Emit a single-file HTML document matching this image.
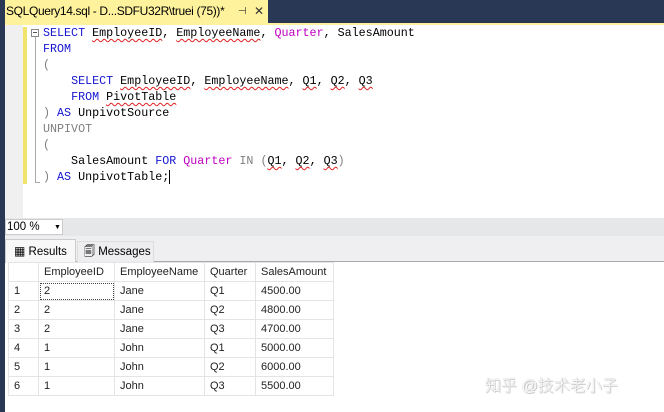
<!DOCTYPE html>
<html><head><style>
*{margin:0;padding:0;box-sizing:border-box}
body{width:664px;height:412px;overflow:hidden;background:#fff;position:relative;font-family:"Liberation Sans",sans-serif}
.abs{position:absolute}
.code{font-family:"Liberation Mono",monospace;font-size:11.7px;white-space:pre;line-height:16px;color:#000}
.k{color:#1515d0}.g{color:#808080}.m{color:#c000c0}
.u{text-decoration:underline wavy #e02020;text-decoration-thickness:1px;text-underline-offset:2px}
table{border-collapse:collapse;font-size:11px;color:#222}
td{height:19px;border:1px solid #e4e4e4;padding:0 0 0 5px}
</style></head><body>
<div class="abs" style="left:0;top:0;width:664px;height:23px;background:#293955"></div>
<div class="abs" style="left:0;top:0;width:268px;height:23px;background:#fff29d;font-size:12px;line-height:23px;padding-left:6px;color:#000;white-space:nowrap;overflow:hidden"><span style="display:inline-block;width:222px;letter-spacing:-0.35px">SQLQuery14.sql - D...SDFU32R\truei (75))*</span><span style="position:absolute;left:238px;font-size:10px;color:#333">⊣</span><span style="position:absolute;left:254px;color:#333">✕</span></div>
<div class="abs" style="left:0;top:23px;width:664px;height:2px;background:#fff29d"></div>
<div class="abs" style="left:0;top:0;width:5px;height:412px;background:#293955"></div>
<div class="abs" style="left:5px;top:25px;width:18px;height:193px;background:#f0f0f0"></div>
<div class="abs" style="left:23px;top:27px;width:4px;height:157px;background:#f2e46a"></div>
<div class="abs" style="left:31px;top:29px;width:8px;height:8px;border:1px solid #888;background:#fff"></div>
<div class="abs" style="left:33px;top:32px;width:4px;height:1px;background:#555"></div>
<div class="abs" style="left:35px;top:37px;width:1px;height:146px;background:#aaa"></div>
<div class="abs" style="left:35px;top:182px;width:5px;height:1px;background:#aaa"></div>
<div class="abs code" style="left:43px;top:25px"><span class="k">SELECT</span> <span class="u">EmployeeID</span>, <span class="u">EmployeeName</span>, <span class="m">Quarter</span>, SalesAmount
<span class="k">FROM</span>
<span class="g">(</span>
    <span class="k">SELECT</span> <span class="u">EmployeeID</span>, <span class="u">EmployeeName</span>, <span class="u">Q1</span>, <span class="u">Q2</span>, <span class="u">Q3</span>
    <span class="k">FROM</span> <span class="u">PivotTable</span>
<span class="g">)</span> <span class="k">AS</span> UnpivotSource
<span class="g">UNPIVOT</span>
<span class="g">(</span>
    SalesAmount <span class="k">FOR</span> <span class="m">Quarter</span> <span class="g">IN</span> <span class="g">(</span><span class="u">Q1</span>, <span class="u">Q2</span>, <span class="u">Q3</span><span class="g">)</span>
<span class="g">)</span> <span class="k">AS</span> UnpivotTable;<span style="border-left:1px solid #000"></span></div>
<div class="abs" style="left:5px;top:218px;width:659px;height:18px;background:#e6e7e8"></div>
<div class="abs" style="left:5px;top:219px;width:58px;height:16px;background:#fff;border:1px solid #ccc;font-size:11.5px;line-height:14px;padding-left:1px">100 %<span style="position:absolute;left:48px;font-size:7px;top:1px">▼</span></div>
<div class="abs" style="left:5px;top:236px;width:659px;height:26px;background:#efeff2;border-bottom:1px solid #aaa"></div>
<div class="abs" style="left:5px;top:239px;width:71px;height:24px;background:#f8f8f8;border:1px solid #ccc;border-bottom:none;font-size:11.5px;line-height:22px;padding-left:8px"><span style="font-size:12px">▦</span> Results</div>
<div class="abs" style="left:77px;top:241px;width:77px;height:21px;background:#eeeef0;border:1px solid #ddd;border-bottom:none;font-size:11.5px;line-height:21px;padding-left:6px"><span style="font-size:11px">🗐</span> Messages</div>
<table class="abs" style="left:8px;top:262px">
<tr><td style="width:30px"></td><td style="width:76px">EmployeeID</td><td style="width:90px">EmployeeName</td><td style="width:51px">Quarter</td><td style="width:78px">SalesAmount</td></tr>
<tr><td>1</td><td style="outline:1px dotted #444;outline-offset:-2px">2</td><td>Jane</td><td>Q1</td><td>4500.00</td></tr>
<tr><td>2</td><td>2</td><td>Jane</td><td>Q2</td><td>4800.00</td></tr>
<tr><td>3</td><td>2</td><td>Jane</td><td>Q3</td><td>4700.00</td></tr>
<tr><td>4</td><td>1</td><td>John</td><td>Q1</td><td>5000.00</td></tr>
<tr><td>5</td><td>1</td><td>John</td><td>Q2</td><td>6000.00</td></tr>
<tr><td>6</td><td>1</td><td>John</td><td>Q3</td><td>5500.00</td></tr>
</table>
<div class="abs" style="left:485px;top:372px;font-family:'Liberation Sans','Noto Sans CJK SC',sans-serif;font-size:16px;font-weight:300;color:#fafafa;text-shadow:0 0 1px #aaa,1px 1px 0 #ccc">知乎 @技术老小子</div>
</body></html>
